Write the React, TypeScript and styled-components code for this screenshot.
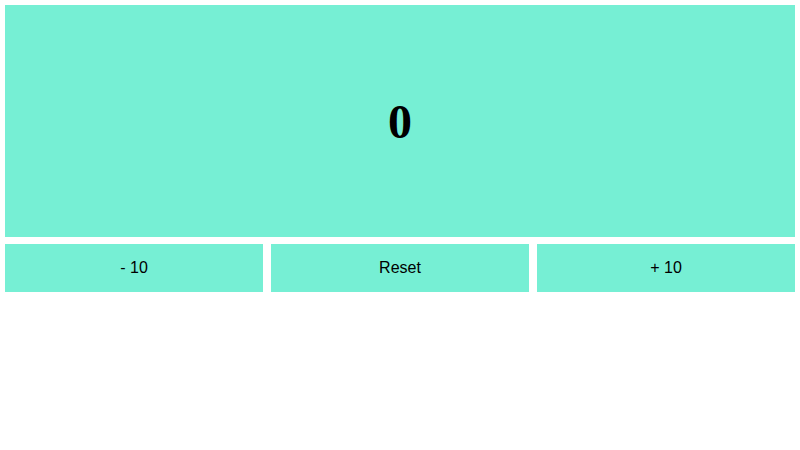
import React, { useState } from "react"
import styled, { createGlobalStyle } from "styled-components"

const GlobalStyle = createGlobalStyle`
  body {
    margin: 0;
    background: #ffffff;
  }
`

const Wrapper = styled.div`
  display: flex;
  flex-direction: column;
  gap: 7px;
  padding: 5px;
`

const Display = styled.div`
  height: 232px;
  background: #76efd4;
  display: flex;
  align-items: center;
  justify-content: center;
  font-family: "Liberation Serif", "Times New Roman", serif;
  font-weight: 700;
  font-size: 48px;
  color: #000;
`

const ButtonRow = styled.div`
  display: grid;
  grid-template-columns: repeat(3, 1fr);
  gap: 8px;
`

const CounterButton = styled.button`
  height: 48px;
  border: none;
  background: #76efd4;
  font-family: "Liberation Sans", Arial, sans-serif;
  font-size: 16px;
  color: #000;
  cursor: pointer;
  padding: 0;
`

const App: React.FC = () => {
  const [count, setCount] = useState(0)

  return (
    <>
      <GlobalStyle />
      <Wrapper>
        <Display>{count}</Display>
        <ButtonRow>
          <CounterButton onClick={() => setCount(count - 10)}>- 10</CounterButton>
          <CounterButton onClick={() => setCount(0)}>Reset</CounterButton>
          <CounterButton onClick={() => setCount(count + 10)}>+ 10</CounterButton>
        </ButtonRow>
      </Wrapper>
    </>
  )
}

export default App
